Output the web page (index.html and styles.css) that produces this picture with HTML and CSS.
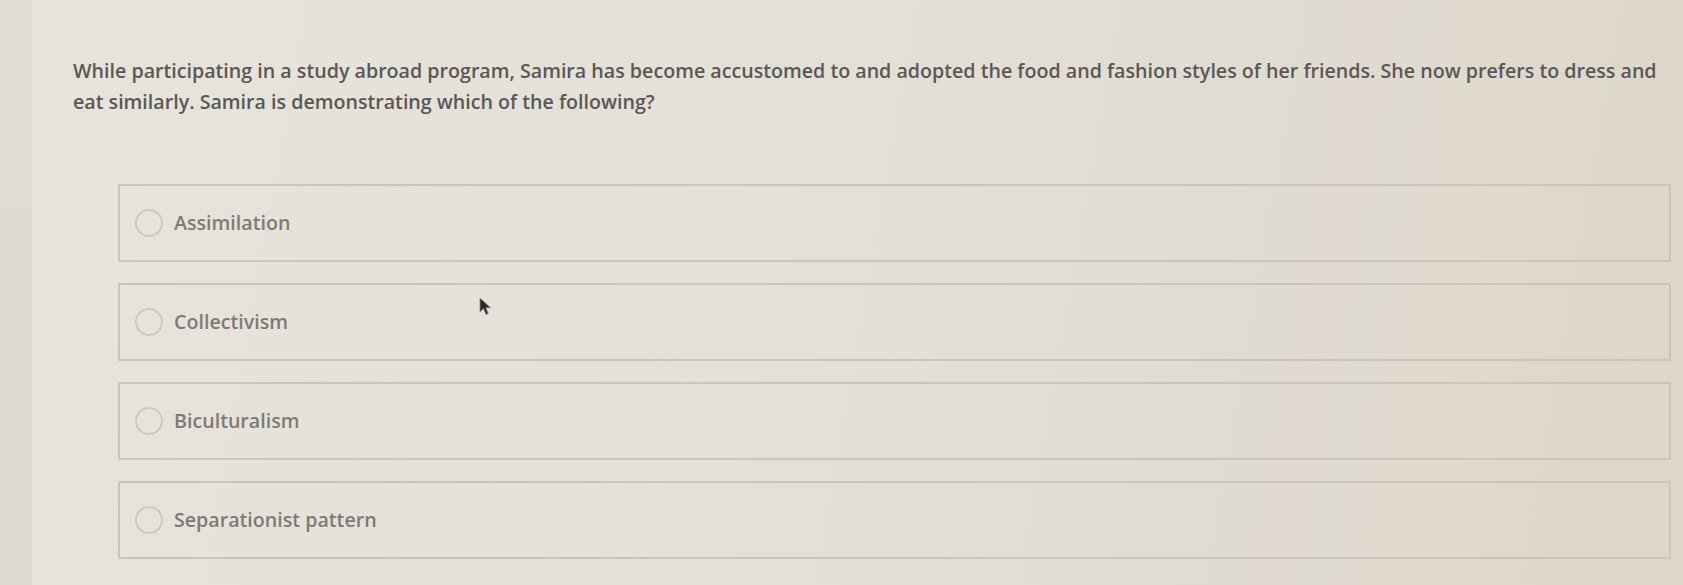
FILE: index.html
```html
<!DOCTYPE html>
<html lang="en">
<head>
<meta charset="utf-8">
<title>Question</title>
<link rel="stylesheet" href="styles.css">
</head>
<body>
<div class="page">
  <div class="strip"></div>
  <main class="main">
    <p class="question">While participating in a study abroad program, Samira has become accustomed to and adopted the food and fashion styles of her friends. She now prefers to dress and eat similarly. Samira is demonstrating which of the following?</p>
    <div class="options">
      <label class="option"><span class="radio"></span><span class="label">Assimilation</span></label>
      <label class="option"><span class="radio"></span><span class="label">Collectivism</span>
        <svg class="cursor" width="14" height="20" viewBox="0 0 14 20"><path d="M1 1 L1 15 L4.5 11.5 L7 17.5 L9.2 16.6 L6.8 10.8 L11.5 10.8 Z" fill="#2a2828" stroke="#8a8684" stroke-width="0.8"/></svg>
      </label>
      <label class="option"><span class="radio"></span><span class="label">Biculturalism</span></label>
      <label class="option"><span class="radio"></span><span class="label">Separationist pattern</span></label>
    </div>
  </main>
</div>
</body>
</html>
```

FILE: styles.css
```css
html, body {
  margin: 0;
  padding: 0;
}
body {
  width: 1683px;
  height: 585px;
  overflow: hidden;
  font-family: "Open Sans", "Liberation Sans", sans-serif;
  background: linear-gradient(100deg, #e6e4dc 0%, #e3dfd6 55%, #ddd6ca 100%);
}
.page {
  display: flex;
  height: 585px;
}
.strip {
  width: 32px;
  flex: none;
  background: linear-gradient(180deg, #dfddd5 0%, #dcd9d0 100%);
}
.main {
  flex: 1;
  padding: 55px 12px 0 41px;
}
.question {
  margin: 0;
  max-width: 1590px;
  font-size: 19.65px;
  line-height: 31px;
  color: #5b5757;
  font-weight: 600;
}
.options {
  margin: 67px 0 0 45px;
  display: flex;
  flex-direction: column;
  gap: 21px;
}
.option {
  position: relative;
  height: 74px;
  border: 2px solid #cac4bc;
  display: flex;
  align-items: center;
  padding-left: 15px;
}
.radio {
  width: 24px;
  height: 24px;
  border: 2px solid #cdc8c1;
  border-radius: 50%;
  flex: none;
}
.label {
  margin-left: 11px;
  font-size: 19.65px;
  font-weight: 600;
  color: #7f7978;
  position: relative;
  top: -1px;
}
.cursor {
  position: absolute;
  left: 359px;
  top: 12px;
}
```
